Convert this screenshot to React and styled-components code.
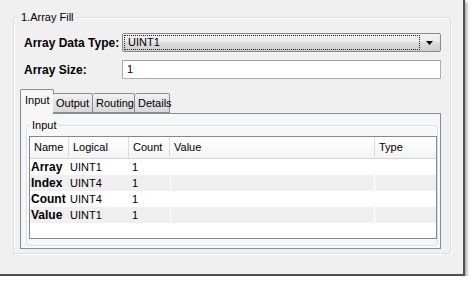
import React from "react";
import styled, { createGlobalStyle } from "styled-components";

const Global = createGlobalStyle`
  html, body { margin: 0; padding: 0; background: #ffffff; }
  body { font-family: "Liberation Sans", Arial, sans-serif; font-size: 11px; color: #000; }
`;

const Window = styled.div`
  box-sizing: border-box;
  width: 465px;
  height: 276px;
  background: #f0f0f0;
  border-right: 2px solid #505050;
  border-bottom: 2px solid #505050;
  box-shadow: 2px 2px 3px rgba(0, 0, 0, 0.35);
  padding: 17px 12px 0 13px;
`;

const GroupBox = styled.div`
  position: relative;
  box-sizing: border-box;
  border: 1px solid #d5dfe5;
  border-radius: 2px;
  box-shadow: inset 1px 1px 0 #fff, 1px 1px 0 #fff;
  height: ${(p) => p.$h}px;
  padding: ${(p) => p.$pad};
`;

const Legend = styled.span`
  position: absolute;
  top: -7px;
  left: ${(p) => p.$left}px;
  padding: 0 2px;
  background: ${(p) => p.$bg};
  line-height: 13px;
  font-size: 11px;
  color: #000;
`;

const FormGrid = styled.div`
  display: grid;
  grid-template-columns: 102px 319px;
  row-gap: 8px;
  align-items: center;
`;

const Label = styled.div`
  font-weight: bold;
  font-size: 12px;
  padding-left: 4px;
`;

const Combo = styled.div`
  box-sizing: border-box;
  height: 19px;
  border: 1px solid #8a8a8a;
  border-radius: 2px;
  background: linear-gradient(#f2f2f2 0%, #ebebeb 45%, #dddddd 50%, #cfcfcf 100%);
  display: flex;
  align-items: center;
  padding: 1px;
`;

const ComboText = styled.div`
  flex: 1;
  box-sizing: border-box;
  height: 15px;
  border: 1px dotted #222;
  padding-left: 3px;
  line-height: 13px;
  font-size: 11px;
`;

const ComboArrow = styled.div`
  width: 19px;
  display: flex;
  justify-content: center;
  align-items: center;
`;

const TextInput = styled.div`
  box-sizing: border-box;
  height: 19px;
  border: 1px solid #abadb3;
  border-top-color: #9a9ca3;
  background: #fff;
  padding-left: 4px;
  line-height: 17px;
  font-size: 11px;
`;

const Tabs = styled.div`
  margin-top: 10px;
  width: 421px;
`;

const TabStrip = styled.div`
  display: flex;
  align-items: flex-end;
  height: 24px;
  padding-left: 1px;
  position: relative;
  z-index: 1;
`;

const Tab = styled.div`
  box-sizing: border-box;
  height: ${(p) => (p.$active ? 25 : 20)}px;
  width: ${(p) => p.$w}px;
  margin-left: ${(p) => (p.$active ? -1 : 0)}px;
  margin-right: ${(p) => (p.$active ? -1 : 0)}px;
  margin-bottom: ${(p) => (p.$active ? -1 : 0)}px;
  border: 1px solid #898c95;
  border-bottom: ${(p) => (p.$active ? "none" : "1px solid #898c95")};
  border-left-width: ${(p) => (p.$first || p.$active ? 1 : 0)}px;
  border-radius: 2px 2px 0 0;
  background: ${(p) => (p.$active ? "#f7f7f7" : "linear-gradient(#f2f2f2, #e3e3e3 50%, #d9d9d9)")};
  font-size: 11px;
  padding: ${(p) => (p.$active ? "4px 0 0 4px" : "3px 0 0 3px")};
  line-height: 13px;
`;

const TabPanel = styled.div`
  box-sizing: border-box;
  height: 136px;
  border: 1px solid #898c95;
  background: #f7f7f7;
  padding: 11px 2px 2px 5px;
`;

const Table = styled.div`
  box-sizing: border-box;
  margin-top: 6px;
  margin-left: 1px;
  width: 408px;
  height: 103px;
  border: 1px solid #828790;
  background: #fff;
`;

const cols = "39px 60px 41px 205px 1fr";

const HeaderRow = styled.div`
  display: grid;
  grid-template-columns: ${cols};
  height: 21px;
  background: linear-gradient(#ffffff, #f4f4f4);
  border-bottom: 1px solid #d5d5d5;
`;

const HeaderCell = styled.div`
  border-right: ${(p) => (p.$last ? "none" : "1px solid #dcdcdc")};
  padding-left: 4px;
  line-height: 20px;
  font-size: 11px;
`;

const Row = styled.div`
  display: grid;
  grid-template-columns: ${cols};
  height: 16px;
  background: ${(p) => (p.$alt ? "#efefef" : "#ffffff")};
`;

const Cell = styled.div`
  line-height: 16px;
  font-size: ${(p) => (p.$bold ? 12 : 11)}px;
  font-weight: ${(p) => (p.$bold ? "bold" : "normal")};
  padding-left: ${(p) => p.$pl}px;
  border-right: ${(p) => (p.$sep ? "1px solid #ffffff" : "none")};
  border-left: ${(p) => (p.$lsep ? "1px solid #ffffff" : "none")};
  white-space: nowrap;
`;

const rows = [
  ["Array", "UINT1", "1"],
  ["Index", "UINT4", "1"],
  ["Count", "UINT4", "1"],
  ["Value", "UINT1", "1"],
];

export default function App() {
  return (
    <>
      <Global />
      <Window>
        <GroupBox $h={237} $pad="15px 10px 0 6px">
          <Legend $left={5} $bg="#f0f0f0">1.Array Fill</Legend>
          <FormGrid>
            <Label>Array Data Type:</Label>
            <Combo>
              <ComboText>UINT1</ComboText>
              <ComboArrow>
                <svg width="7" height="4" viewBox="0 0 7 4">
                  <path d="M0 0H7L3.5 4Z" fill="#000" />
                </svg>
              </ComboArrow>
            </Combo>
            <Label>Array Size:</Label>
            <TextInput>1</TextInput>
          </FormGrid>
          <Tabs>
            <TabStrip>
              <Tab $active $first $w={34}>Input</Tab>
              <Tab $w={40}>Output</Tab>
              <Tab $w={42}>Routing</Tab>
              <Tab $w={35}>Details</Tab>
            </TabStrip>
            <TabPanel>
              <GroupBox $h={121} $pad="4px 1px 0 1px">
                <Legend $left={3} $bg="#f7f7f7">Input</Legend>
                <Table>
                  <HeaderRow>
                    <HeaderCell>Name</HeaderCell>
                    <HeaderCell>Logical</HeaderCell>
                    <HeaderCell>Count</HeaderCell>
                    <HeaderCell>Value</HeaderCell>
                    <HeaderCell $last>Type</HeaderCell>
                  </HeaderRow>
                  {rows.map((r, i) => (
                    <Row key={r[0]} $alt={i % 2 === 1}>
                      <Cell $bold $pl={1}>{r[0]}</Cell>
                      <Cell $pl={1}>{r[1]}</Cell>
                      <Cell $pl={3}>{r[2]}</Cell>
                      <Cell $sep $lsep />
                      <Cell />
                    </Row>
                  ))}
                </Table>
              </GroupBox>
            </TabPanel>
          </Tabs>
        </GroupBox>
      </Window>
    </>
  );
}
